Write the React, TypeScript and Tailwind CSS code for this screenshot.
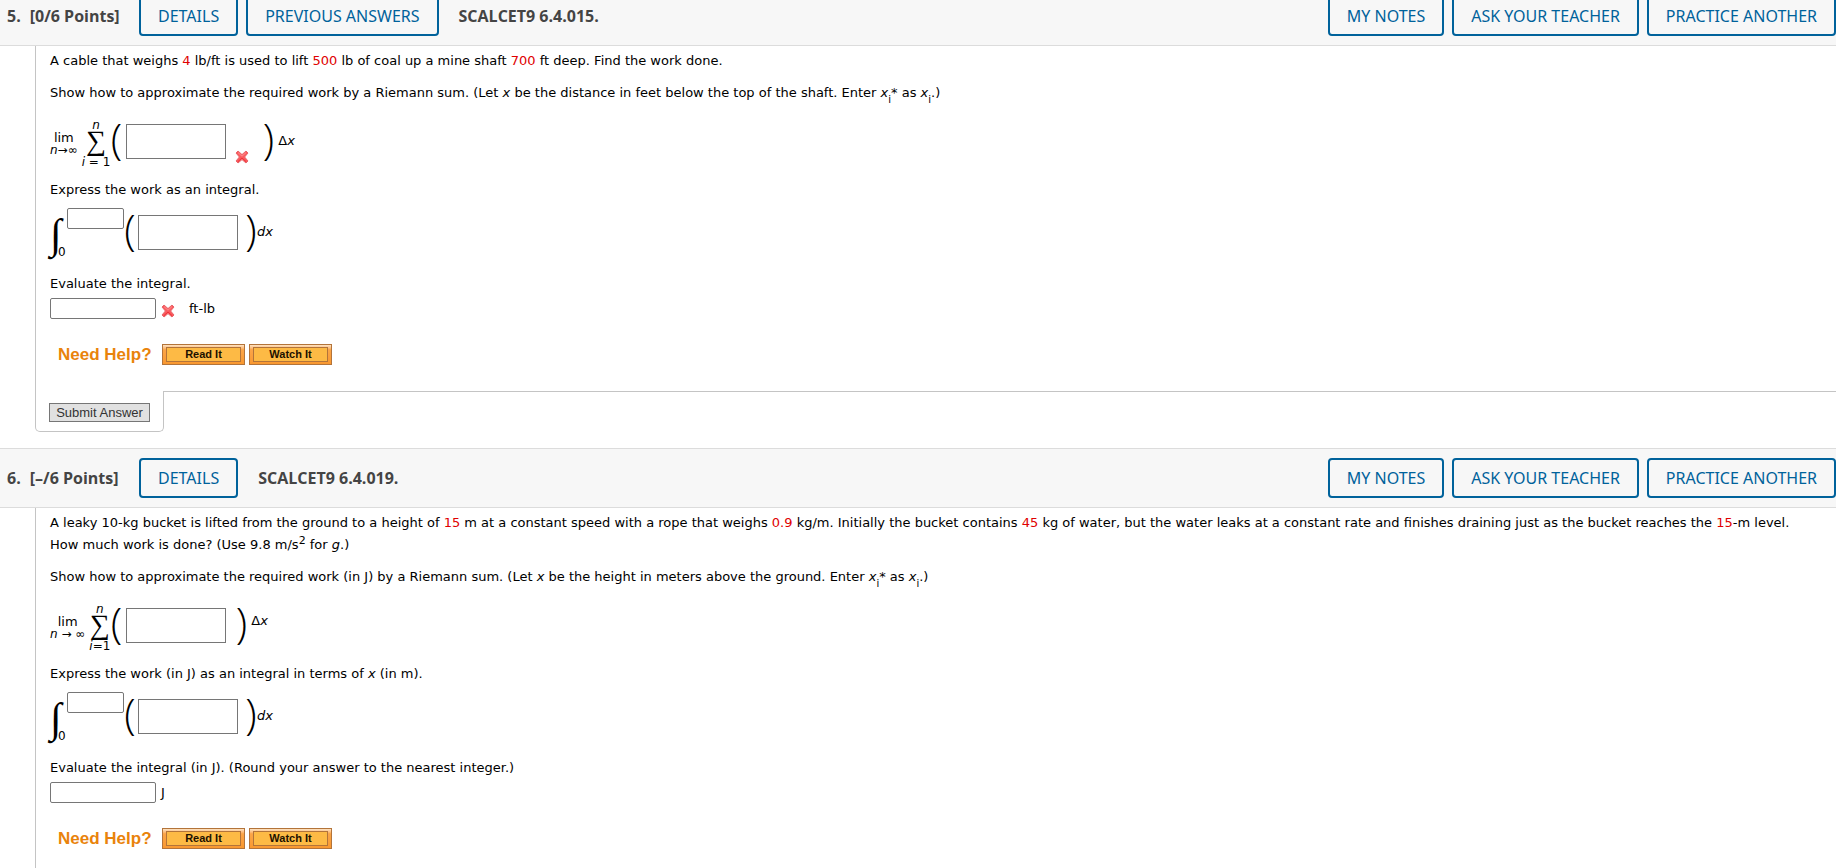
import React from 'react';

interface HeaderProps {
  number: number;
  points: string;
  actions: string[];
  code: string;
}

const headerButton =
  "h-10 rounded-[4px] border-2 border-[#00629b] px-[17px] font-['Noto_Sans',sans-serif] text-[16px] leading-none text-[#00629b] whitespace-nowrap";

function QuestionHeader({ number, points, actions, code }: HeaderProps) {
  return (
    <header className="flex items-center justify-between border-y border-[#dcdcdc] bg-[#f7f7f7] py-[9px] pl-[7px] font-['Open_Sans',sans-serif] text-[16px]">
      <div className="flex items-center">
        <h2 className="flex w-[132px] gap-[9px] font-bold text-[#444] whitespace-nowrap">
          <span>{number}.</span>
          <span>{points}</span>
        </h2>
        <div className="flex gap-2">
          {actions.map((label) => (
            <button key={label} type="button" className={headerButton}>{label}</button>
          ))}
        </div>
        <span className="ml-5 font-bold text-[#444]">{code}</span>
      </div>
      <div className="flex gap-2">
        <button type="button" className={headerButton}>MY NOTES</button>
        <button type="button" className={headerButton}>ASK YOUR TEACHER</button>
        <button type="button" className={headerButton}>PRACTICE ANOTHER</button>
      </div>
    </header>
  );
}

function Num({ children }: { children: React.ReactNode }) {
  return <span className="text-[#e00000]">{children}</span>;
}

function Paren({ children }: { children: string }) {
  return (
    <span className="w-3 pb-[6px] text-center font-['Open_Sans',sans-serif] text-[42px] leading-8 font-light">
      {children}
    </span>
  );
}

function WrongMark() {
  return (
    <svg className="h-[14px] w-[14px] shrink-0" viewBox="0 0 14 14" role="img" aria-label="Incorrect">
      <path
        d="M3 1 L7 4.6 L11 1 L13 3 L9.6 7 L13 11 L11 13 L7 9.6 L3 13 L1 11 L4.4 7 L1 3 Z"
        fill="#fb5a5e"
        stroke="#e8656a"
        strokeWidth="1"
        strokeLinejoin="round"
      />
      <path d="M3 2.6 L7 6.2 L11 2.6" fill="none" stroke="#ff8f8f" strokeWidth="1" />
      <path d="M3 11.6 L7 8 L11 11.6" fill="none" stroke="#ee3338" strokeWidth="1" />
    </svg>
  );
}

function XSub() {
  return (
    <>
      <i>x</i><sub className="bottom-[-6px] text-[10px] leading-none">i</sub>
    </>
  );
}

interface RiemannProps {
  limit: string;
  start: React.ReactNode;
  wrong?: boolean;
}

function RiemannSum({ limit, start, wrong }: RiemannProps) {
  return (
    <div className="mt-[15px] flex h-11 items-center">
      <div className="flex flex-col items-center pt-1">
        <span className="leading-[14px]">lim</span>
        <span className="text-[12px] leading-[10px]"><i>n</i>{limit}</span>
      </div>
      <div className="ml-1 flex flex-col items-center pt-1 text-[12px]">
        <i className="leading-[10px]">n</i>
        <span className="pb-[5px] font-['Liberation_Serif',serif] text-[28px] leading-[22px]">∑</span>
        <span className="leading-[10px] whitespace-nowrap">{start}</span>
      </div>
      <Paren>(</Paren>
      <input type="text" aria-label="Riemann sum term" className="ml-1 h-[35px] w-[100px] border border-[#767676] bg-white px-1" />
      {wrong && <span className="mt-8 mr-1 ml-[9px]"><WrongMark /></span>}
      <span className="ml-[9px] flex"><Paren>)</Paren></span>
      <span className={wrong ? "ml-1" : "ml-1 pb-2"}>Δ<i>x</i></span>
    </div>
  );
}

function Integral() {
  return (
    <div className="mt-[7px] flex h-12 items-center">
      <div className="flex h-full">
        <span className="w-2 self-end pb-1 font-['Liberation_Serif',serif] text-[42px] leading-9">∫</span>
        <div className="flex flex-col justify-between">
          <input type="text" aria-label="Upper limit" className="ml-[9px] h-[21px] w-[57px] rounded-[2px] border border-[#767676] bg-white px-1" />
          <span className="text-[12px] leading-[8px]">0</span>
        </div>
      </div>
      <Paren>(</Paren>
      <input type="text" aria-label="Integrand" className="ml-[2px] h-[35px] w-[100px] border border-[#767676] bg-white px-1" />
      <span className="ml-[7px] flex"><Paren>)</Paren></span>
      <i>dx</i>
    </div>
  );
}

function HelpButton({ children }: { children: string }) {
  return (
    <button
      type="button"
      className="h-[21px] w-[83px] border border-[#b3743a] bg-linear-to-b from-[#fde3c4] via-[#fba548] via-25% to-[#f9982f] px-[3px] py-[2px] font-['Liberation_Sans',sans-serif] text-[11px] font-bold text-[#1c1000]"
    >
      <span className="flex h-full items-center justify-center border border-[#b3743a] bg-[#fdba45] leading-none">{children}</span>
    </button>
  );
}

function NeedHelp() {
  return (
    <div className="mt-[25px] flex items-center gap-1 pl-2">
      <span className="w-[100px] font-['Liberation_Sans',sans-serif] text-[17px] leading-5 font-bold text-[#e9830b]">Need Help?</span>
      <HelpButton>Read It</HelpButton>
      <HelpButton>Watch It</HelpButton>
    </div>
  );
}

function Answer({ unit, wrong }: { unit: string; wrong?: boolean }) {
  return (
    <div className="mt-[3px] flex h-[21px] items-center">
      <input type="text" aria-label="Answer" className="h-[21px] w-[106px] rounded-[2px] border border-[#767676] bg-white px-1" />
      {wrong && <span className="mt-1 mr-[9px] ml-[5px]"><WrongMark /></span>}
      <span className="ml-[5px] leading-5">{unit}</span>
    </div>
  );
}

const body =
  "ml-[35px] border-l border-[#c4c4c4] pt-1 pr-5 pb-[26px] pl-[14px] font-['DejaVu_Sans',sans-serif] text-[13px] leading-[22px] text-black";

export default function App() {
  return (
    <div className="h-screen overflow-hidden bg-white">
      <main className="-mt-[14px]">
        <section>
          <QuestionHeader number={5} points="[0/6 Points]" actions={["DETAILS", "PREVIOUS ANSWERS"]} code="SCALCET9 6.4.015." />
          <div className={body}>
            <p>
              A cable that weighs <Num>4</Num> lb/ft is used to lift <Num>500</Num> lb of coal up a mine shaft <Num>700</Num> ft deep. Find the work done.
            </p>
            <p className="mt-[10px]">
              Show how to approximate the required work by a Riemann sum. (Let <i>x</i> be the distance in feet below the top of the shaft. Enter <XSub />* as <XSub />.)
            </p>
            <RiemannSum limit="→∞" start={<><i>i</i> = 1</>} wrong />
            <p className="mt-4">Express the work as an integral.</p>
            <Integral />
            <p className="mt-[17px]">Evaluate the integral.</p>
            <Answer unit="ft-lb" wrong />
            <NeedHelp />
          </div>
          <div className="mb-4 ml-[35px] flex">
            <div className="rounded-b-[5px] border border-t-0 border-[#c4c4c4] px-[13px] pt-3 pb-[9px]">
              <button
                type="button"
                className="block h-[19px] w-[101px] border border-[#767676] bg-[#e1e1e1] font-['Liberation_Sans',sans-serif] text-[13px] leading-none text-[#333] whitespace-nowrap"
              >
                Submit Answer
              </button>
            </div>
            <div className="flex-1 border-t border-[#c4c4c4]" />
          </div>
        </section>

        <section>
          <QuestionHeader number={6} points="[–/6 Points]" actions={["DETAILS"]} code="SCALCET9 6.4.019." />
          <div className={body}>
            <p>
              A leaky 10-kg bucket is lifted from the ground to a height of <Num>15</Num> m at a constant speed with a rope that weighs <Num>0.9</Num> kg/m. Initially the bucket contains <Num>45</Num> kg of water, but the water leaks at a constant rate and finishes draining just as the bucket reaches the <Num>15</Num>-m level. How much work is done? (Use 9.8 m/s<sup className="text-[11px] leading-none">2</sup> for <i>g</i>.)
            </p>
            <p className="mt-[10px]">
              Show how to approximate the required work (in J) by a Riemann sum. (Let <i>x</i> be the height in meters above the ground. Enter <XSub />* as <XSub />.)
            </p>
            <RiemannSum limit=" → ∞" start={<><i>i</i>=1</>} />
            <p className="mt-4">Express the work (in J) as an integral in terms of <i>x</i> (in m).</p>
            <Integral />
            <p className="mt-[17px]">Evaluate the integral (in J). (Round your answer to the nearest integer.)</p>
            <Answer unit="J" />
            <NeedHelp />
          </div>
        </section>
      </main>
    </div>
  );
}
